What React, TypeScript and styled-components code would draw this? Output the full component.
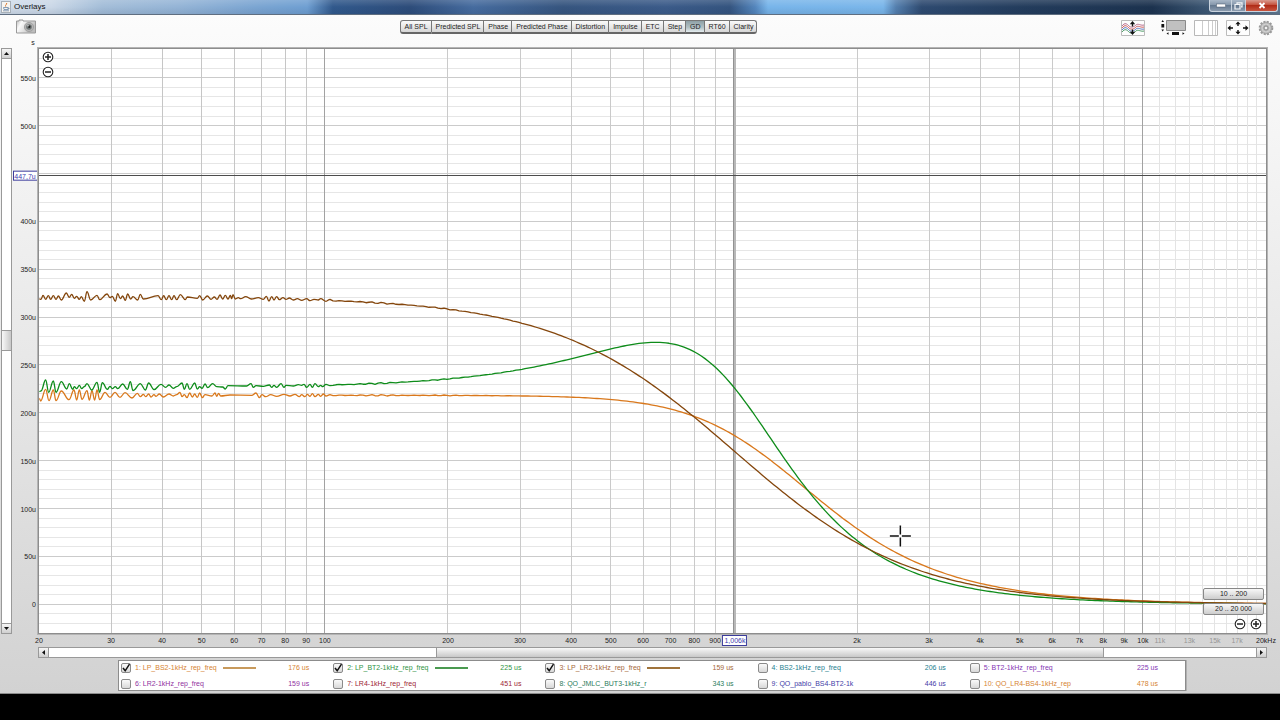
import React, { useState } from "react";
import styled, { createGlobalStyle } from "styled-components";

const GlobalStyle = createGlobalStyle`
  * { box-sizing: border-box; }
  html, body { margin: 0; background: #000; }
  body, button, input {
    font-family: "Liberation Sans", Arial, sans-serif;
    font-size: 7px;
    line-height: 10px;
    color: #222;
  }
  button { padding: 0; }
  svg { display: block; }
`;

/* ---------- window frame ---------- */

const Screen = styled.div`
  display: flex;
  flex-direction: column;
  min-height: 100vh;
  padding-bottom: 26px;
  background: #000;
`;

const TitleBar = styled.header`
  display: flex;
  align-items: center;
  height: 15px;
  padding-left: 1px;
  gap: 3px;
  border-bottom: 1px solid #5f6e80;
  background:
    linear-gradient(rgba(255, 255, 255, 0.15), rgba(255, 255, 255, 0) 50%, rgba(20, 40, 70, 0.1)),
    linear-gradient(90deg,
      #d3deeb 0, #cbd8e7 4%, #a3bdd8 8%, #94b4d6 14%, #7ba5d2 20%, #6f9fd2 24%,
      #31598c 26%, #2d4c7a 32%, #466c9f 37%, #36557f 44%, #3b5b89 52%, #34547f 57%,
      #5486bd 59%, #78b5ea 60%, #7ab6ea 69%, #547fae 70%, #2e4a70 72%,
      #233c5c 80%, #1c324e 90%, #3a5470 94%, #61788f 100%);
`;

const AppIcon = styled.span`
  width: 10px;
  height: 12px;
  border: 1px solid #a8b0b8;
  background: #f6f4f0;
`;

const Title = styled.h1`
  flex: 1;
  margin: 0;
  font-size: 8px;
  line-height: 12px;
  font-weight: 400;
  color: #111;
`;

const WindowButtons = styled.div`
  display: flex;
  align-self: flex-start;
  margin-right: 2px;
`;

const WindowButton = styled.button<{ $kind: "min" | "restore" | "close" }>`
  display: grid;
  place-items: center;
  width: ${(p) => (p.$kind === "close" ? 32 : p.$kind === "min" ? 23 : 14)}px;
  height: 12px;
  border: 1px solid #c9d3de;
  border-top: 0;
  border-left-width: ${(p) => (p.$kind === "min" ? 1 : 0)}px;
  border-radius: ${(p) => (p.$kind === "min" ? "0 0 0 3px" : p.$kind === "close" ? "0 0 3px 0" : "0")};
  background: ${(p) =>
    p.$kind === "close"
      ? "linear-gradient(#d99a8e, #c4513c 45%, #b02c18 50%, #c8553f)"
      : "linear-gradient(#a9b8c8, #8496aa 45%, #64788f 50%, #8b9caf)"};
`;

const Content = styled.main`
  display: flex;
  flex: 1;
  flex-direction: column;
  background: linear-gradient(#fcfcfc, #f4f4f4 20%, #e6e6e6 55%, #d2d2d2);
  border-bottom: 1px solid #8c8c8c;
  padding-bottom: 2px;
`;

/* ---------- toolbar ---------- */

const Toolbar = styled.div`
  display: flex;
  align-items: flex-start;
  height: 33px;
  padding: 4px 6px 0 16px;
`;

const IconButton = styled.button`
  display: block;
  border: 0;
  background: none;
`;

const Tabs = styled.div`
  display: flex;
  flex: 1;
  justify-content: center;
  padding-top: 1px;
`;

const Tab = styled.button<{ $active: boolean }>`
  height: 14px;
  padding: 0 3px 0 4px;
  white-space: nowrap;
  border: 1px solid #777;
  border-left-width: 0;
  border-bottom: 2px solid #666;
  background: ${(p) =>
    p.$active ? "linear-gradient(#8ea0a6, #b4c2c6 60%, #e4ecee)" : "linear-gradient(#fafafa, #d6d6d6)"};
  &:first-child { border-left-width: 1px; border-radius: 3px 0 0 3px; }
  &:last-child { border-radius: 0 3px 3px 0; }
`;

const Tools = styled.div`
  display: flex;
  gap: 8px;
  button:nth-child(2) { margin-left: 8px; }
`;

/* ---------- graph area ---------- */

const GraphArea = styled.section`
  display: grid;
  flex: 1;
  grid-template-columns: 12px 26px minmax(0, 1fr);
  grid-template-rows: minmax(200px, 1fr) 13px 11px;
  padding-right: 13px;
`;

const Scroller = styled.div<{ $vertical?: boolean }>`
  display: flex;
  flex-direction: ${(p) => (p.$vertical ? "column" : "row")};
  margin-left: ${(p) => (p.$vertical ? 1 : 0)}px;
  grid-column: ${(p) => (p.$vertical ? 1 : 3)};
  border: 1px solid #999;
  background: #fff;
`;

const ScrollArrow = styled.button`
  display: grid;
  place-items: center;
  flex: 0 0 9px;
  min-width: 9px;
  border: 0;
  outline: 1px solid #999;
  background: linear-gradient(#f6f6f6, #cfcfcf);
`;

const Gap = styled.div<{ $grow: number }>`
  flex: ${(p) => p.$grow} 0 0;
`;

const Thumb = styled.div<{ $grow: number; $vertical?: boolean }>`
  flex: ${(p) => p.$grow} 0 0;
  outline: 1px solid #999;
  background: linear-gradient(${(p) => (p.$vertical ? "90deg" : "180deg")}, #f8f8f8, #c8c8c8);
`;

const Axis = styled.svg`
  width: 100%;
  height: 100%;
  overflow: visible;
  font-size: 7px;
  fill: #222;
`;

const YAxisCell = styled.div`
  grid-column: 2;
  padding: 1px 0;
  min-height: 0;
`;

const XAxisCell = styled.div`
  grid-column: 3;
  padding: 0 1px;
`;

const Plot = styled.div`
  position: relative;
  grid-column: 3;
  min-height: 0;
  border: 1px solid #8d8d8d;
  outline: 1px solid #b4b4b4;
  background: #fff;
`;

const PlotSvg = styled.svg`
  position: absolute;
  inset: 0;
  width: 100%;
  height: 100%;
`;

const ZoomCorner = styled.div`
  position: absolute;
  top: 2px;
  left: 3px;
  display: grid;
  gap: 3px;
`;

const RangeCorner = styled.div`
  position: absolute;
  right: 2px;
  bottom: 3px;
  display: grid;
  gap: 3px;
  width: 61px;
`;

const RangeButton = styled.button`
  height: 12px;
  border: 1px solid #888;
  border-radius: 2px;
  background: linear-gradient(#f8f8f8, #cdcdcd);
`;

const ZoomRow = styled.div`
  display: flex;
  justify-content: flex-end;
  gap: 4px;
  padding-right: 2px;
`;

/* ---------- legend ---------- */

const Legend = styled.section`
  display: grid;
  grid-template-columns: repeat(5, minmax(0, 1fr));
  row-gap: 3px;
  margin: 2px 94px 0 118px;
  padding: 0 3px 0 2px;
  border: 1px solid #8c8c8c;
  background: #fff;
  box-shadow: 1px 0 0 #b0b0b0;
`;

const Entry = styled.label<{ $color: string }>`
  display: flex;
  align-items: center;
  height: 13px;
  padding-right: 24px;
  white-space: nowrap;
  color: ${(p) => p.$color};
`;

const CheckHolder = styled.span`
  position: relative;
  width: 10px;
  height: 10px;
  margin-right: 4px;
`;

const Check = styled.input`
  appearance: none;
  display: block;
  width: 10px;
  height: 10px;
  margin: 0;
  border: 1px solid #8a8a8a;
  border-radius: 2px;
  background: linear-gradient(#fafafa, #d8d8d8);
`;

const CheckMark = styled.svg`
  position: absolute;
  inset: 0;
  pointer-events: none;
`;

const Swatch = styled.span<{ $color: string }>`
  width: 33px;
  height: 2px;
  margin-left: 6px;
  background: ${(p) => p.$color};
`;

const Value = styled.output`
  margin-left: auto;
`;

/* ---------- data ---------- */

const TABS = ["All SPL", "Predicted SPL", "Phase", "Predicted Phase", "Distortion", "Impulse", "ETC", "Step", "GD", "RT60", "Clarity"];

const TRACES = [
  { name: "1: LP_BS2-1kHz_rep_freq", value: "176 us", color: "#d68432", line: "#c89a5c" },
  { name: "2: LP_BT2-1kHz_rep_freq", value: "225 us", color: "#2f9444", line: "#4a9a50" },
  { name: "3: LP_LR2-1kHz_rep_freq", value: "159 us", color: "#a5683a", line: "#a0743c" },
  { name: "4: BS2-1kHz_rep_freq", value: "206 us", color: "#258090" },
  { name: "5: BT2-1kHz_rep_freq", value: "225 us", color: "#8436b4" },
  { name: "6: LR2-1kHz_rep_freq", value: "159 us", color: "#9030a0" },
  { name: "7: LR4-1kHz_rep_freq", value: "451 us", color: "#9c2434" },
  { name: "8: QO_JMLC_BUT3-1kHz_r", value: "343 us", color: "#2c7c5c" },
  { name: "9: QO_pablo_BS4-BT2-1k", value: "446 us", color: "#4440a8" },
  { name: "10: QO_LR4-BS4-1kHz_rep", value: "478 us", color: "#d68432" },
];

const Y_MAX = 580;
const Y_SPAN = 610;
const fx = (hz: number) => Math.log10(hz / 20) / 3;
const fy = (us: number) => (Y_MAX - us) / Y_SPAN;
const pct = (v: number) => `${(v * 100).toFixed(3)}%`;

const X_LINES: { hz: number; color: string }[] = [];
for (let k = 3; k <= 9; k++) X_LINES.push({ hz: k * 10, color: "#c6c6c6" });
for (let k = 2; k <= 9; k++) X_LINES.push({ hz: k * 100, color: "#cacaca" }, { hz: k * 1000, color: "#cacaca" });
for (let k = 11; k <= 19; k++) X_LINES.push({ hz: k * 1000, color: "#e4e4e4" });
[100, 10000].forEach((hz) => X_LINES.push({ hz, color: "#a2a2a2" }));

const Y_LINES = Array.from({ length: 60 }, (_, i) => -20 + i * 10);

const X_LABELS: [number, string][] = [
  [20, "20"], [30, "30"], [40, "40"], [50, "50"], [60, "60"], [70, "70"], [80, "80"], [90, "90"],
  [100, "100"], [200, "200"], [300, "300"], [400, "400"], [500, "500"], [600, "600"], [700, "700"],
  [800, "800"], [900, "900"], [2000, "2k"], [3000, "3k"], [4000, "4k"], [5000, "5k"], [6000, "6k"],
  [7000, "7k"], [8000, "8k"], [9000, "9k"], [10000, "10k"], [11000, "11k"], [13000, "13k"],
  [15000, "15k"], [17000, "17k"], [20000, "20kHz"],
];
const Y_LABELS = [0, 50, 100, 150, 200, 250, 300, 350, 400, 500, 550];

/* Curves are drawn in a 3681 x 1752 space. */
const W = 3681;
const H = 1752;

/* Peaks and troughs of the ripple below 100 Hz, as x,y pairs. */
const RIPPLE = {
  lr: "1,750 6,751 12,739 20,751 28,740 35,751 43,740 51,751 58,741 67,753 82,732 91,745 98,736 106,748 113,742 121,751 127,743 136,757 144,728 155,753 174,739 182,752 204,735 213,746 220,742 229,757 236,734 244,749 251,741 259,754 266,735 275,750 282,743 296,753 304,736 313,750 357,740 367,752 374,740 382,752 390,740 398,752 405,740 413,752 424,737 439,752 445,744 475,748 482,740 491,753 505,741 516,751 526,744 534,751 543,738 551,750 559,739 567,750 574,739 578,749 582,737 589,750 598,746 605,749 620,743 637,750 658,746 673,751 682,742 690,756 698,743 705,753 713,743 721,752 732,746 741,751 751,747 763,753 775,749 788,754 803,749 813,755 825,751 838,753 845,749 861,757 873,751",
  bt: "1,1028 6,1026 20,993 29,1030 43,996 51,1030 67,998 83,1020 91,1004 101,1021 106,1013 113,1019 121,1009 128,1019 136,1013 144,1004 158,1023 174,1000 182,1030 190,1001 205,1021 213,1012 220,1019 229,1013 236,1019 251,1005 265,1021 274,998 282,1025 304,1004 319,1023 329,1002 345,1022 366,1006 380,1015 390,1008 403,1018 413,1013 429,1002 436,1021 444,1004 452,1021 467,1002 475,1020 482,1013 489,1018 498,1005 506,1016 521,1004 533,1013 551,1014 559,1020 567,1010 623,1011 636,1004 643,1015 651,1010 673,1012 691,1008 698,1015 705,1009 713,1015 726,1004 735,1015 741,1009 763,1011 778,1007 788,1009 795,1006 803,1015 813,1006 820,1015 828,1004 838,1013 845,1009 851,1013 861,1006 873,1010",
  bs: "1,1048 5,1056 20,1021 30,1055 43,1023 51,1055 67,1026 90,1052 105,1023 113,1053 121,1023 129,1051 144,1025 151,1053 159,1025 167,1053 174,1023 182,1052 198,1030 213,1045 228,1030 243,1045 258,1031 279,1047 295,1033 304,1043 313,1036 320,1043 329,1035 336,1044 345,1037 351,1042 361,1035 373,1044 390,1035 403,1041 413,1037 423,1030 429,1043 436,1037 444,1046 452,1032 460,1044 467,1035 475,1045 482,1032 490,1046 498,1037 519,1041 528,1032 533,1042 539,1033 545,1041 573,1038 638,1039 651,1032 661,1046 669,1037 680,1043 695,1037 713,1042 735,1036 753,1041 768,1036 781,1043 788,1037 798,1043 805,1036 813,1042 820,1034 828,1043 838,1036 845,1042 853,1035 861,1041 873,1037",
};

/* Second-order low-pass group delay in us, u = f / 1 kHz. */
const TAU = 160.3;
const delay = {
  lr: (u: number) => (2 * TAU) / (1 + u * u),
  bt: (u: number) => (Math.SQRT2 * TAU * (1 + u * u)) / (1 + u ** 4),
  bs: (u: number) => {
    const q = (1.3617 * u) ** 2;
    return (1.3617 * TAU * (9 + 3 * q)) / (9 + 3 * q + q * q);
  },
};

/* Each ripple point is an extremum, so the joining beziers have level tangents. */
function curve(kind: "lr" | "bt" | "bs") {
  const extrema = RIPPLE[kind].split(" ").map((p) => p.split(",").map(Number));
  let d = `M${extrema[0].join(" ")}`;
  for (let i = 1; i < extrema.length; i++) {
    const [x0, y0] = extrema[i - 1];
    const [x1, y1] = extrema[i];
    const a = (x1 - x0) * 0.4;
    d += `C${(x0 + a).toFixed(1)} ${y0} ${(x1 - a).toFixed(1)} ${y1} ${x1} ${y1}`;
  }
  for (let x = 882; x <= W; x += 9) {
    const hz = 20 * 10 ** ((3 * x) / W);
    const fade = Math.max(0, 1 - (x - 882) / 620);
    const wobble = 3 * fade * Math.sin(x / 5 + (kind === "bt" ? 1 : 0)) * (0.6 + 0.4 * Math.sin(x / 31));
    d += `L${x} ${(fy(delay[kind](hz / 1000)) * H + wobble).toFixed(1)}`;
  }
  return d;
}

const CURVES = [
  { d: curve("bs"), color: "#d9781c" },
  { d: curve("bt"), color: "#0e8c1a" },
  { d: curve("lr"), color: "#84460c" },
];

/* ---------- icons ---------- */

const ZoomIcon = ({ plus }: { plus?: boolean }) => (
  <svg width="12" height="12" viewBox="0 0 12 12" fill="none" stroke="#222">
    <circle cx="6" cy="6" r="4.8" strokeWidth="1.1" fill="#fff" />
    <path d={plus ? "M3 6h6M6 3v6" : "M3 6h6"} strokeWidth="1.5" />
  </svg>
);

const Arrow = ({ d }: { d: string }) => (
  <svg width="5" height="5" viewBox="0 0 5 5"><path d={d} fill="#111" /></svg>
);

const CameraIcon = () => (
  <svg width="20" height="15" viewBox="0 0 20 15">
    <defs>
      <linearGradient id="body" x1="0" x2="1" y2="0.4">
        <stop offset="0" stopColor="#bbb" /><stop offset="0.3" stopColor="#fafafa" /><stop offset="1" stopColor="#bdbdbd" />
      </linearGradient>
    </defs>
    <path d="M3 1h4v1h12.500v12H.5V2H3z" fill="url(#body)" stroke="#9a9a9a" />
    <circle cx="13" cy="8" r="4.600" fill="#b4b4b4" stroke="#999" strokeWidth="0.800" />
    <circle cx="13" cy="8" r="2.800" fill="#6d7474" />
    <circle cx="13.300" cy="7.700" r="1.200" fill="#222" />
    <circle cx="12" cy="6.800" r="0.700" fill="#e8e8e8" />
  </svg>
);

const TracesIcon = () => (
  <svg width="24" height="16" viewBox="0 0 24 16" fill="none">
    <path d="M.5.5h23v15H.5z" fill="#fdfdfd" stroke="#bbb" />
    <path d="M1 6c3-4 5-2 7 0s5 1 7-1 5 1 8 0" stroke="#b56a8c" />
    <path d="M1 8c3-4 5-2 7 0s5 1 7-1 5 1 8 0" stroke="#d05a5a" />
    <path d="M1 10c3-4 5-2 7 0s5 1 7-1 5 1 8 0" stroke="#5876c0" />
    <path d="M1 12c3-4 5-2 7 0s5 1 7-1 5 1 8 0" stroke="#4a9a64" />
    <path d="M11.500 1l2.700 3.200h-2V6.500h-1.400V4.200h-2zM11.500 15l2.700-3.200h-2V9.500h-1.400v2.300h-2z" fill="#111" />
  </svg>
);

const ScrollbarsIcon = () => (
  <svg width="25" height="17" viewBox="0 0 25 17" fill="#111">
    <path d="M5.500 1.500h19v10h-19z" fill="#c0c0c0" stroke="#8a8a8a" />
    <path d="M.4 3l1.300-2L3 3zM.4 5h2.800v3.500H.4zM.4 10.500l1.300 2 1.300-2z" />
    <path d="M7.500 13.200v2.600l-2-1.300zM11 13h7v3h-7zM21.500 13.200v2.600l2-1.300z" />
  </svg>
);

const GridIcon = () => (
  <svg width="24" height="16" viewBox="0 0 24 16" fill="none">
    <path d="M.5.5h23v15H.5z" fill="#fff" stroke="#b8b8b8" />
    <path d="M8.500 1v14M14.500 1v14M18.500 1v14M21.500 1v14" stroke="#ccc" />
  </svg>
);

const FitIcon = () => (
  <svg width="24" height="16" viewBox="0 0 24 16">
    <path d="M.5.5h23v15H.5z" fill="#fdfdfd" stroke="#bbb" />
    <path d="M12 1.500l2.600 2.800h-1.900V6h-1.400V4.300H9.400zM12 14.500l2.600-2.800h-1.900V10h-1.400v1.700H9.400zM1.500 8l3-2.700v2H7v1.400H4.500v2zM22.500 8l-3-2.700v2H17v1.400h2.500v2z" fill="#111" />
  </svg>
);

const GearIcon = () => (
  <svg width="16" height="16" viewBox="0 0 16 16">
    <circle cx="8" cy="8" r="6.500" fill="none" stroke="#9a9a9a" strokeWidth="1.600" strokeDasharray="2.100 1.300" />
    <circle cx="8" cy="8" r="5.800" fill="#b9b9b9" stroke="#888" strokeWidth="0.600" />
    <circle cx="8" cy="8" r="4" fill="none" stroke="#d2d2d2" />
    <circle cx="8" cy="8" r="2" fill="#f2f2f2" stroke="#888" />
  </svg>
);

const JavaIcon = () => (
  <svg width="8" height="10" viewBox="0 0 8 10" fill="none">
    <path d="M4.500 1c1 1.500-1.800 1.800-.8 3.600" stroke="#d9752a" />
    <path d="M1.500 5.500h4.500v2H2zM6 6h1v1H6M1 8.800h6" stroke="#6a88a8" strokeWidth="0.800" />
  </svg>
);

/* ---------- parts ---------- */

function Graph() {
  return (
    <Plot>
      <PlotSvg role="img" aria-label="Group delay against frequency">
        <g shapeRendering="crispEdges">
          {Y_LINES.map((v) => (
            <line key={v} x1="0" x2="100%" y1={pct(fy(v))} y2={pct(fy(v))} stroke={v % 50 === 0 ? "#cbcbcb" : "#e6e6e6"} />
          ))}
          {X_LINES.map(({ hz, color }) => (
            <line key={hz} x1={pct(fx(hz))} x2={pct(fx(hz))} y1="0" y2="100%" stroke={color} />
          ))}
          <line x1={pct(fx(1003))} x2={pct(fx(1003))} y1="0" y2="100%" stroke="#b8b8b8" strokeWidth="3" />
          <line x1={pct(fx(1000))} x2={pct(fx(1000))} y1="0" y2="100%" stroke="#929292" />
          <line x1="0" x2="100%" y1={pct(fy(447.7))} y2={pct(fy(447.7))} stroke="#4c4c4c" />
        </g>
        <svg width="100%" height="100%" viewBox={`0 0 ${W} ${H}`} preserveAspectRatio="none">
          {CURVES.map((c) => (
            <path key={c.color} d={c.d} fill="none" stroke={c.color} strokeWidth="1.3" strokeLinejoin="round" vectorEffect="non-scaling-stroke" />
          ))}
        </svg>
        <svg x="70.200%" y="83.400%" overflow="visible">
          <path d="M-10.500 0h21M0-10.500v21" stroke="#fff" strokeWidth="3" />
          <path d="M-10.500 0h9M1.500 0h9M0-10.500v9M0 1.500v9" stroke="#111" strokeWidth="1.500" />
        </svg>
      </PlotSvg>
      <ZoomCorner>
        <IconButton aria-label="Zoom in vertically"><ZoomIcon plus /></IconButton>
        <IconButton aria-label="Zoom out vertically"><ZoomIcon /></IconButton>
      </ZoomCorner>
      <RangeCorner>
        <RangeButton>10 .. 200</RangeButton>
        <RangeButton>20 .. 20 000</RangeButton>
        <ZoomRow>
          <IconButton aria-label="Zoom out horizontally"><ZoomIcon /></IconButton>
          <IconButton aria-label="Zoom in horizontally"><ZoomIcon plus /></IconButton>
        </ZoomRow>
      </RangeCorner>
    </Plot>
  );
}

function YAxis() {
  return (
    <YAxisCell>
      <Axis>
        <text x="21" y="-4" textAnchor="middle">s</text>
        {Y_LABELS.map((v) => (
          <text key={v} x="24" y={pct(fy(v))} dy="3" textAnchor="end">{v === 0 ? "0" : `${v}u`}</text>
        ))}
        <svg y={pct(fy(447.7))} overflow="visible">
          <rect x="1.500" y="-4.500" width="24" height="9" fill="#fff" stroke="#3c3c9c" />
          <text x="13" y="3" textAnchor="middle" fill="#3c3cb0">447,7u</text>
        </svg>
      </Axis>
    </YAxisCell>
  );
}

function XAxis() {
  return (
    <XAxisCell>
      <Axis>
        {X_LABELS.map(([hz, label]) => (
          <text key={hz} x={pct(fx(hz))} y="9" textAnchor="middle" fill={hz > 10000 && hz < 20000 ? "#969696" : "#222"}>{label}</text>
        ))}
        <svg x={pct(fx(1006))} overflow="visible">
          <rect x="-12.500" y="1.500" width="24" height="10" fill="#fff" stroke="#3c3c9c" />
          <text x="0" y="9" textAnchor="middle" fill="#3c3cb0">1,006k</text>
        </svg>
      </Axis>
    </XAxisCell>
  );
}

export default function App() {
  const [tab, setTab] = useState("GD");
  return (
    <Screen>
      <GlobalStyle />
      <TitleBar>
        <AppIcon><JavaIcon /></AppIcon>
        <Title>Overlays</Title>
        <WindowButtons>
          <WindowButton $kind="min" aria-label="Minimize">
            <svg width="10" height="5"><rect x="0.500" y="1" width="9" height="3" fill="#fff" stroke="#4a5a6c" strokeWidth="0.500" /></svg>
          </WindowButton>
          <WindowButton $kind="restore" aria-label="Restore">
            <svg width="9" height="8" fill="none" stroke="#f4f6f8"><path d="M3 2V.8h5v4H7M1 2.500h5v4.500H1z" strokeWidth="1.200" /></svg>
          </WindowButton>
          <WindowButton $kind="close" aria-label="Close">
            <svg width="8" height="7"><path d="M1.500 1l5 5M6.500 1l-5 5" stroke="#fff" strokeWidth="1.800" /></svg>
          </WindowButton>
        </WindowButtons>
      </TitleBar>
      <Content>
        <Toolbar>
          <IconButton aria-label="Capture graph"><CameraIcon /></IconButton>
          <Tabs>
            {TABS.map((t) => (
              <Tab key={t} $active={t === tab} aria-pressed={t === tab} onClick={() => setTab(t)}>{t}</Tab>
            ))}
          </Tabs>
          <Tools>
            <IconButton aria-label="Separate traces"><TracesIcon /></IconButton>
            <IconButton aria-label="Toggle scrollbars"><ScrollbarsIcon /></IconButton>
            <IconButton aria-label="Frequency axis scale"><GridIcon /></IconButton>
            <IconButton aria-label="Graph limits"><FitIcon /></IconButton>
            <IconButton aria-label="Graph controls"><GearIcon /></IconButton>
          </Tools>
        </Toolbar>
        <GraphArea>
          <Scroller $vertical>
            <ScrollArrow aria-label="Scroll up"><Arrow d="M0 4l2.500-3L5 4z" /></ScrollArrow>
            <Gap $grow={272} />
            <Thumb $grow={19} $vertical />
            <Gap $grow={273} />
            <ScrollArrow aria-label="Scroll down"><Arrow d="M0 1l2.500 3L5 1z" /></ScrollArrow>
          </Scroller>
          <YAxis />
          <Graph />
          <XAxis />
          <Scroller>
            <ScrollArrow aria-label="Scroll left"><Arrow d="M4 0v5L1 2.500z" /></ScrollArrow>
            <Gap $grow={389} />
            <Thumb $grow={666} />
            <Gap $grow={154} />
            <ScrollArrow aria-label="Scroll right"><Arrow d="M1 0v5l3-2.500z" /></ScrollArrow>
          </Scroller>
        </GraphArea>
        <Legend>
          {TRACES.map((t) => (
            <Entry key={t.name} $color={t.color}>
              <CheckHolder>
                <Check type="checkbox" defaultChecked={!!t.line} />
                {t.line && (
                  <CheckMark width="10" height="10" viewBox="0 0 10 10" fill="none">
                    <path d="M2 5l2.200 2.800L8.500 1.200" stroke="#111" strokeWidth="1.500" />
                  </CheckMark>
                )}
              </CheckHolder>
              {t.name}
              {t.line && <Swatch $color={t.line} />}
              <Value>{t.value}</Value>
            </Entry>
          ))}
        </Legend>
      </Content>
    </Screen>
  );
}
